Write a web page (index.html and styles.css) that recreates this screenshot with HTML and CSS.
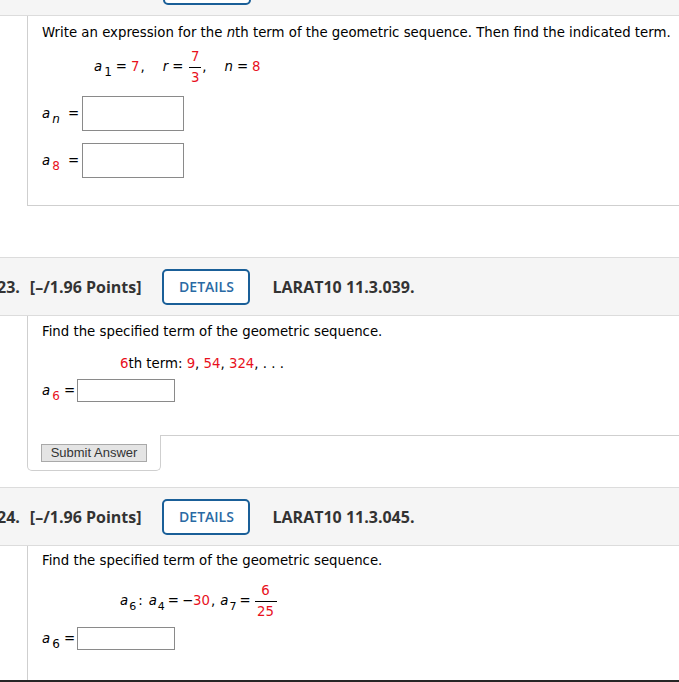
FILE: index.html
```html
<!DOCTYPE html>
<html lang="en">
<head>
<meta charset="utf-8">
<title>Geometric sequences</title>
<link rel="stylesheet" href="styles.css">
</head>
<body>
<div class="page">
  <div class="qhead qhead-top">
    <button class="details" type="button">DETAILS</button>
  </div>

  <div class="qbody q1">
    <p class="prompt">Write an expression for the <i>n</i>th term of the geometric sequence. Then find the indicated term.</p>
    <div class="given g1">
      <span class="v"><i>a</i><sub>1</sub></span><span class="op">=</span><span class="red">7</span><span class="comma">,</span>
      <span class="v sp"><i>r</i></span><span class="op">=</span><span class="frac"><span class="num red">7</span><span class="den red">3</span></span><span class="comma">,</span>
      <span class="v sp"><i>n</i></span><span class="op">=</span><span class="red">8</span>
    </div>
    <div class="answer big">
      <span class="lbl"><i>a</i><sub><i>n</i></sub></span><span class="eq">=</span><span class="box"></span>
    </div>
    <div class="answer big">
      <span class="lbl"><i>a</i><sub class="red">8</sub></span><span class="eq">=</span><span class="box"></span>
    </div>
  </div>

  <div class="qhead q23">
    <span class="qnum">23.</span>
    <span class="pts">[–/1.96 Points]</span>
    <button class="details" type="button">DETAILS</button>
    <span class="code">LARAT10 11.3.039.</span>
  </div>

  <div class="qbody q2">
    <p class="prompt">Find the specified term of the geometric sequence.</p>
    <div class="given g2"><span class="red">6</span>th term: <span class="red">9</span>, <span class="red">54</span>, <span class="red">324</span>, .&nbsp;.&nbsp;.</div>
    <div class="answer small">
      <span class="lbl"><i>a</i><sub class="red">6</sub></span><span class="eq">=</span><span class="box"></span>
    </div>
  </div>
  <div class="submit-wrap">
    <button class="submit" type="button">Submit Answer</button>
  </div>

  <div class="qhead q24">
    <span class="qnum">24.</span>
    <span class="pts">[–/1.96 Points]</span>
    <button class="details" type="button">DETAILS</button>
    <span class="code">LARAT10 11.3.045.</span>
  </div>

  <div class="qbody q3">
    <p class="prompt">Find the specified term of the geometric sequence.</p>
    <div class="given g3">
      <span class="v"><i>a</i><sub>6</sub></span><span class="colon">:</span>
      <span class="v"><i>a</i><sub>4</sub></span><span class="op">=</span><span>−<span class="red">30</span></span><span class="comma c2">,</span>
      <span class="v"><i>a</i><sub>7</sub></span><span class="op">=</span><span class="frac wide"><span class="num red">6</span><span class="den red">25</span></span>
    </div>
    <div class="answer small">
      <span class="lbl"><i>a</i><sub>6</sub></span><span class="eq">=</span><span class="box"></span>
    </div>
  </div>
  <div class="bottom-bar"></div>
</div>
</body>
</html>
```

FILE: styles.css
```css
* { box-sizing: border-box; }

html, body {
  margin: 0;
  padding: 0;
  background: #ffffff;
}

.page {
  display: flow-root;
  width: 679px;
  height: 682px;
  overflow: hidden;
  font-family: "DejaVu Sans", Verdana, sans-serif;
  font-size: 13.3px;
  color: #000;
}

/* ---------- question header band ---------- */
.qhead {
  height: 59px;
  background: #f5f5f5;
  border-top: 1px solid #dcdcdc;
  border-bottom: 1px solid #dcdcdc;
  display: flex;
  align-items: center;
  font-family: "Open Sans", sans-serif;
  font-weight: 700;
  font-size: 16px;
  color: #333;
}

.qhead-top {
  margin-top: -43px;
  padding-left: 163px;
}

.qnum {
  margin-left: -3px;
  margin-right: 10px;
}

.pts { margin-right: 21px; }

.details {
  width: 88px;
  height: 36px;
  border: 2px solid #1a5f98;
  border-radius: 5px;
  background: #fff;
  color: #2a6aa4;
  font-family: "Open Sans", sans-serif;
  font-weight: 600;
  font-size: 14px;
  padding: 0;
  margin-right: 22px;
}

.q23 { margin-top: 51px; }
.q24 { margin-top: 16px; }

/* ---------- question body ---------- */
.qbody {
  margin-left: 27px;
  border-left: 1px solid #cfcfcf;
  border-bottom: 1px solid #cfcfcf;
  padding-left: 14px;
}

.prompt {
  margin: 0;
  line-height: 16px;
}

.red { color: #e8101c; }

.given {
  display: flex;
  align-items: center;
  line-height: 16px;
  white-space: pre;
}

.v i, .lbl i { font-style: italic; }

sub {
  font-size: 12px;
  vertical-align: -5px;
  line-height: 0;
  margin-left: 2px;
}

.op { margin: 0 4px; }
.sp { margin-left: 18px; }
.comma { margin-left: 1px; }
.colon { margin: 0 6px 0 2px; }

.g3 sub { font-size: 11px; margin-left: 1px; }
.g3 .op { margin: 0 3px; }
.g3 .c2 { margin-right: 5px; }

.frac {
  display: inline-flex;
  flex-direction: column;
  align-items: center;
  line-height: 16px;
  margin-left: 2px;
}

.frac .num {
  border-bottom: 1px solid #000;
  padding: 0 1px 2px;
  width: 12px;
  text-align: center;
}

.frac .den { padding-top: 2px; }

.frac.wide { margin-left: 1px; }
.frac.wide .num { width: 22px; }

.answer {
  display: flex;
  align-items: center;
}

.lbl { width: 26px; }

.eq { width: 14px; }

.box {
  display: block;
  border: 1px solid #8a8a8a;
  background: #fff;
}

/* question 1 */
.q1 {
  padding-top: 9px;
  height: 190px;
}

.g1 {
  height: 34px;
  margin-top: 9px;
  padding-left: 52px;
}

.answer.big { margin-top: 12px; }
.answer.big .box { width: 102px; height: 35px; }

/* question 2 */
.q2 {
  padding-top: 8px;
  height: 120px;
}

.g2 {
  margin-top: 16px;
  padding-left: 78px;
}

.answer.small { margin-top: 7px; }
.answer.small .lbl { width: 22px; }
.answer.small .eq { width: 13px; }
.answer.small .box { width: 98px; height: 23px; }

.submit-wrap {
  margin-left: 27px;
  margin-top: -1px;
  width: 134px;
  height: 36px;
  background: #fff;
  border: 1px solid #cfcfcf;
  border-top: none;
  border-radius: 0 0 5px 5px;
  padding: 9px 0 0 13px;
}

.submit {
  display: block;
  width: 106px;
  height: 18px;
  padding: 0;
  border: 1px solid #a9a9a9;
  background: #e4e4e4;
  font-family: "Liberation Sans", Arial, sans-serif;
  font-size: 13px;
  color: #333;
  line-height: 16px;
}

/* question 3 */
.q3 {
  padding-top: 7px;
  height: 134px;
  border-bottom: none;
}

.g3 {
  margin-top: 15px;
  height: 34px;
  padding-left: 78px;
}

.q3 .answer.small { margin-top: 9px; }

.bottom-bar {
  height: 2px;
  background: #262626;
}
```
